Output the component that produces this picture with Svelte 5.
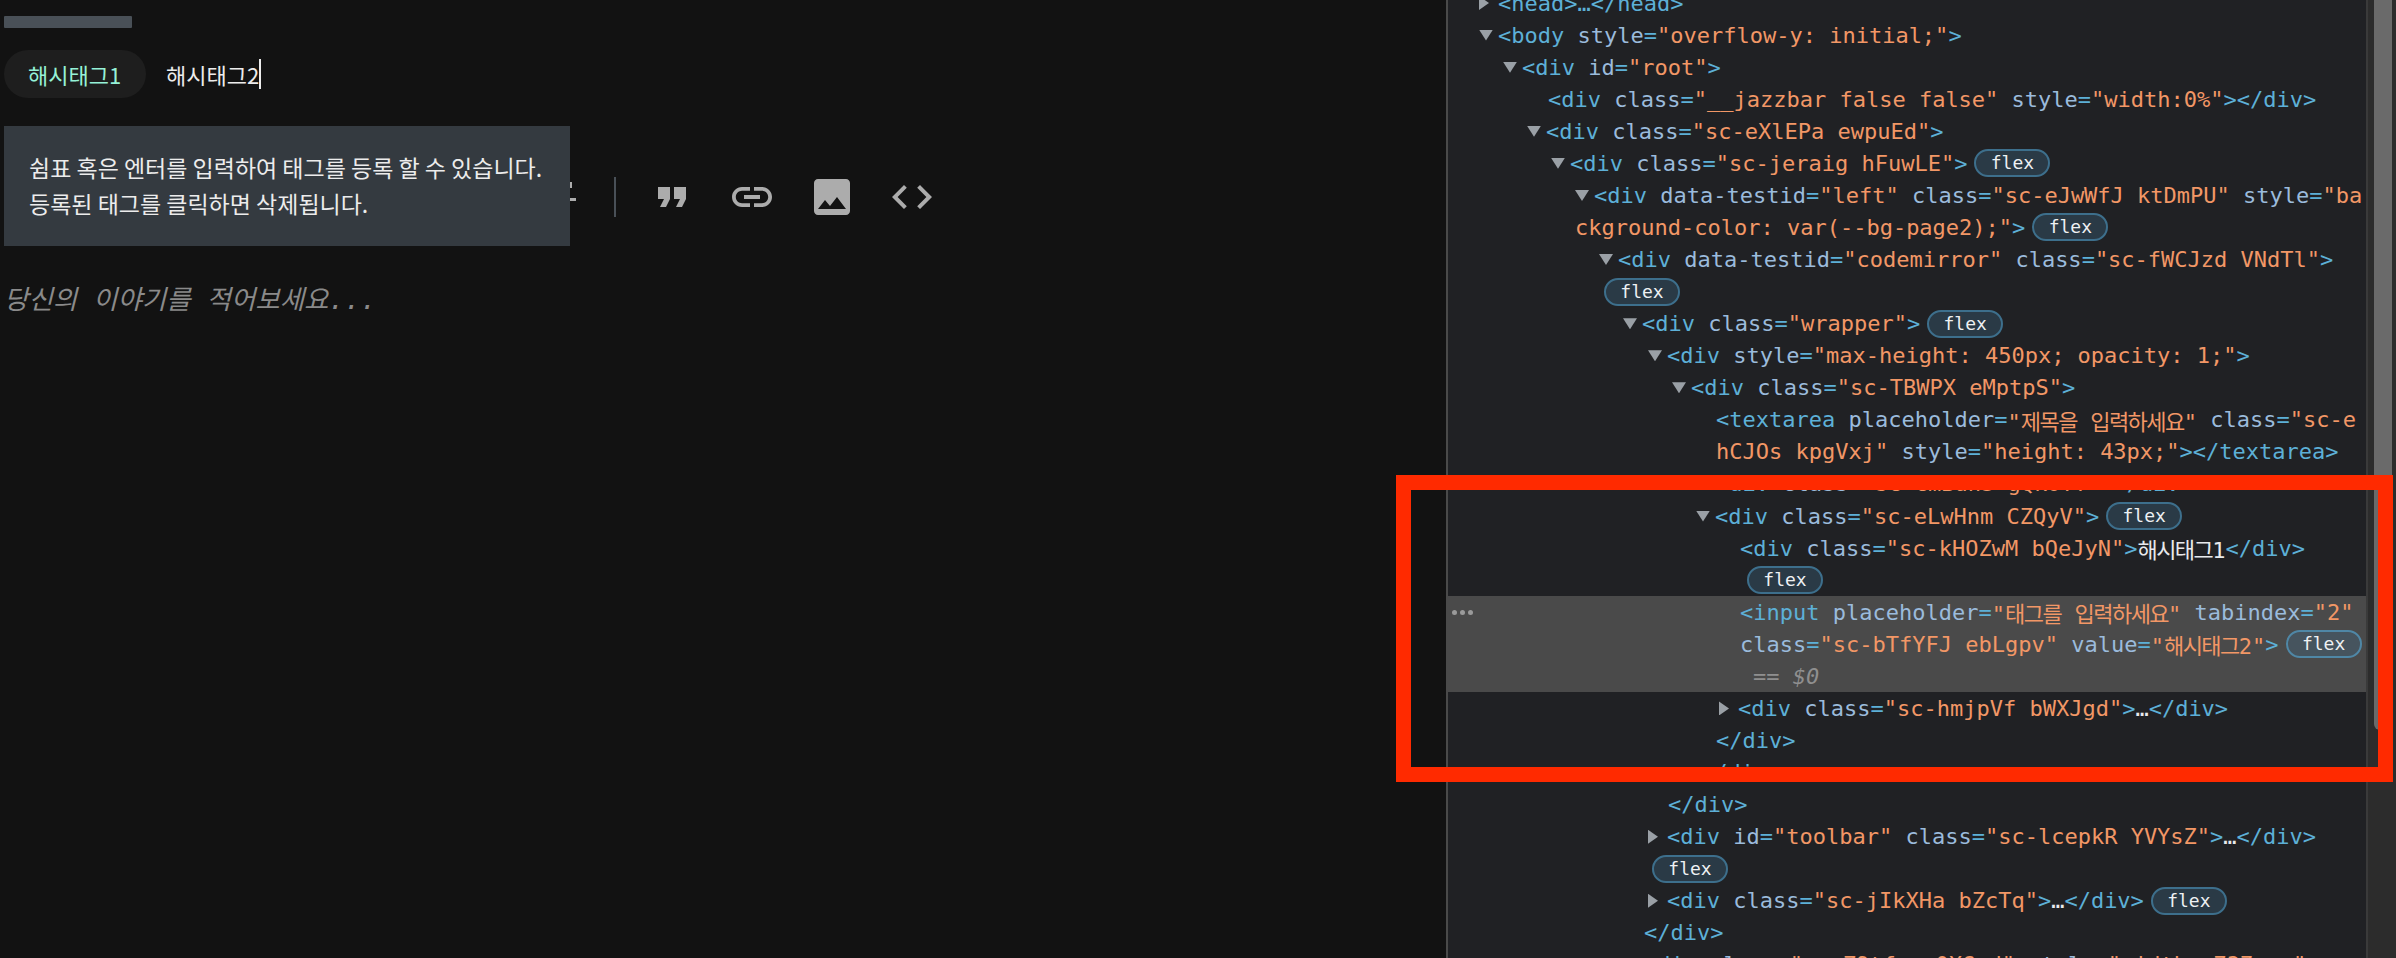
<script>
    // x is where the row's text starts on the page, the panel starts at 1448
    const rows = [
        { x: 1498, s: "<head>…</head>", tri: "right" },
        { x: 1498, s: '<body style="overflow-y: initial;">', tri: "down" },
        { x: 1522, s: '<div id="root">', tri: "down" },
        { x: 1548, s: '<div class="__jazzbar false false" style="width:0%"></div>' },
        { x: 1546, s: '<div class="sc-eXlEPa ewpuEd">', tri: "down" },
        { x: 1570, s: '<div class="sc-jeraig hFuwLE">', tri: "down", flex: true },
        { x: 1594, s: '<div data-testid="left" class="sc-eJwWfJ ktDmPU" style="ba', tri: "down" },
        { x: 1575, head: 'ckground-color: var(--bg-page2);"', s: ">", flex: true },
        { x: 1618, s: '<div data-testid="codemirror" class="sc-fWCJzd VNdTl">', tri: "down" },
        { x: 1604, s: "", flex: true },
        { x: 1642, s: '<div class="wrapper">', tri: "down", flex: true },
        { x: 1667, s: '<div style="max-height: 450px; opacity: 1;">', tri: "down" },
        { x: 1691, s: '<div class="sc-TBWPX eMptpS">', tri: "down" },
        { x: 1716, s: '<textarea placeholder="제목을 입력하세요" class="sc-e' },
        { x: 1716, head: 'hCJOs kpgVxj"', s: ' style="height: 43px;"></textarea>' },
        { x: 1716, s: '<div class="sc-cmBdnS gQkOTT"></div>' },
        { x: 1715, s: '<div class="sc-eLwHnm CZQyV">', tri: "down", flex: true },
        { x: 1740, s: '<div class="sc-kHOZwM bQeJyN">해시태그1</div>' },
        { x: 1747, s: "", flex: true },
        { x: 1740, s: '<input placeholder="태그를 입력하세요" tabindex="2"', sel: true, dots: true },
        { x: 1740, s: 'class="sc-bTfYFJ ebLgpv" value="해시태그2">', sel: true, flex: true },
        { x: 1753, s: "", sel: true, ref: true },
        { x: 1738, s: '<div class="sc-hmjpVf bWXJgd">…</div>', tri: "right" },
        { x: 1716, s: "</div>" },
        { x: 1701, s: "</div>" },
        { x: 1668, s: "</div>" },
        { x: 1667, s: '<div id="toolbar" class="sc-lcepkR YVYsZ">…</div>', tri: "right" },
        { x: 1652, s: "", flex: true },
        { x: 1667, s: '<div class="sc-jIkXHa bZcTq">…</div>', tri: "right", flex: true },
        { x: 1644, s: "</div>" },
        { x: 1644, s: '<div class="sc-Z9tfcw 0XGcd" style="width: 737px;">', tri: "right" },
    ];

    function tokens(s) {
        const out = [];
        const re = /("[^"]*"?)|([\w-]+(?==))|(>)([^<]+)(?=<)|([^"]+?(?=[\w-]+=|"|$))/g;
        let m;
        while ((m = re.exec(s))) {
            if (m[1]) out.push({ c: "val", t: m[1] });
            else if (m[2]) out.push({ c: "attr", t: m[2] });
            else if (m[3]) {
                out.push({ c: "mk", t: m[3] });
                out.push({ c: "txt", t: m[4] });
            } else out.push({ c: "mk", t: m[5] });
        }
        return out;
    }

    // hangul runs sit at the odd indexes
    const parts = (t) => t.split(/([가-힣]+)/);
</script>

<div class="page">
    <div class="left">
        <div class="title-bar"></div>
        <div class="tags">
            <div class="tag">해시태그1</div>
            <div class="tag-input">해시태그2<i class="caret"></i></div>
        </div>
        <div class="toolbar">
            <svg class="icon strike" viewBox="0 0 48 48" fill="currentColor">
                <rect x="42" y="9" width="2" height="6" />
                <rect x="42" y="25" width="6" height="3" />
            </svg>
            <div class="divider"></div>
            <svg class="icon" viewBox="0 0 24 24" fill="currentColor">
                <path d="M6 17h3l2-4V7H5v6h3zm8 0h3l2-4V7h-6v6h3z" />
            </svg>
            <svg class="icon" viewBox="0 0 24 24" fill="currentColor">
                <path d="M3.9 12c0-1.71 1.39-3.1 3.1-3.1h4V7H7c-2.76 0-5 2.24-5 5s2.24 5 5 5h4v-1.9H7c-1.71 0-3.1-1.39-3.1-3.1zM8 13h8v-2H8v2zm9-6h-4v1.9h4c1.71 0 3.1 1.39 3.1 3.1s-1.39 3.1-3.1 3.1h-4V17h4c2.76 0 5-2.24 5-5s-2.24-5-5-5z" />
            </svg>
            <svg class="icon" viewBox="0 0 24 24" fill="currentColor">
                <path d="M21 19V5c0-1.1-.9-2-2-2H5c-1.1 0-2 .9-2 2v14c0 1.1.9 2 2 2h14c1.1 0 2-.9 2-2zM8.5 13.5l2.5 3.01L14.5 12l4.5 6H5l3.5-4.5z" />
            </svg>
            <svg class="icon" viewBox="0 0 24 24" fill="currentColor">
                <path d="M9.4 16.6L4.8 12l4.6-4.6L8 6l-6 6 6 6 1.4-1.4zm5.2 0l4.6-4.6-4.6-4.6L16 6l6 6-6 6-1.4-1.4z" />
            </svg>
        </div>
        <div class="placeholder">당신의 이야기를 적어보세요...</div>
        <div class="hint">
            <p>쉼표 혹은 엔터를 입력하여 태그를 등록 할 수 있습니다.</p>
            <p>등록된 태그를 클릭하면 삭제됩니다.</p>
        </div>
    </div>

    <div class="devtools">
        <div class="tree">
            {#each rows as r}
                <div class="row" class:sel={r.sel} style="padding-left: {r.x - 1448}px">
                    {#if r.dots}
                        <span class="dots"><b></b><b></b><b></b></span>
                    {/if}
                    {#if r.tri}
                        <i class="tri {r.tri}"></i>
                    {/if}
                    {#if r.head}
                        <span class="val">{r.head}</span>
                    {/if}
                    {#if r.ref}
                        <span class="ref">== <em>$0</em></span>
                    {/if}
                    {#each tokens(r.s) as t}
                        <span class={t.c}>{#each parts(t.t) as p, i}<span class:ko={i % 2}>{p}</span>{/each}</span>
                    {/each}
                    {#if r.flex}
                        <span class="badge" class:alone={!r.s}>flex</span>
                    {/if}
                </div>
            {/each}
        </div>
        <div class="scrollbar"><div class="thumb"></div></div>
    </div>

    <div class="callout"></div>
</div>

<style>
    :global(body) {
        margin: 0;
        background: #121212;
    }
    .page {
        position: relative;
        display: flex;
        width: 2396px;
        height: 958px;
        overflow: hidden;
    }
    .left {
        position: relative;
        flex: none;
        box-sizing: border-box;
        width: 1446px;
        padding: 16px 0 0 4px;
        background: #121212;
        font-family: "Noto Sans CJK KR", sans-serif;
    }
    .title-bar {
        width: 128px;
        height: 12px;
        border-radius: 1px;
        background: #495057;
    }
    .tags {
        display: flex;
        align-items: center;
        height: 48px;
        margin-top: 22px;
        font-size: 22px;
    }
    .tag {
        display: flex;
        align-items: center;
        box-sizing: border-box;
        width: 142px;
        height: 48px;
        margin-right: 20px;
        padding-left: 24px;
        border-radius: 24px;
        background: #1e1e1e;
        color: #96f2d7;
    }
    .tag-input {
        display: flex;
        align-items: center;
        color: #ececec;
    }
    .caret {
        width: 2px;
        height: 30px;
        background: #ececec;
    }
    .toolbar {
        display: flex;
        align-items: center;
        gap: 32px;
        height: 48px;
        margin-top: 75px;
        color: #acacac;
    }
    .icon {
        flex: none;
        width: 48px;
        height: 48px;
    }
    .strike {
        margin-left: 524px;
        margin-right: 6px;
    }
    .divider {
        width: 2px;
        height: 40px;
        background: #495057;
    }
    .placeholder {
        margin-top: 57px;
        color: #8a8a8a;
        font-family: "DejaVu Sans Mono", "Noto Sans CJK KR", monospace;
        font-size: 26.5px;
        font-style: italic;
    }
    .hint {
        position: absolute;
        left: 4px;
        top: 126px;
        box-sizing: border-box;
        width: 566px;
        height: 120px;
        padding: 23px 25px;
        background: #343a40;
        color: #ececec;
        font-size: 23px;
        line-height: 36px;
    }
    .hint p {
        margin: 0;
        white-space: nowrap;
    }

    .devtools {
        display: flex;
        flex: 1;
        min-width: 0;
        border-left: 2px solid #4a4a4a;
        background: #202124;
    }
    .tree {
        flex: 1;
        min-width: 0;
        margin-top: -13px;
        overflow: hidden;
        font-family: "DejaVu Sans Mono", "Noto Sans CJK KR", monospace;
        font-size: 22px;
    }
    .row {
        position: relative;
        display: flex;
        align-items: center;
        height: 32.07px;
        white-space: pre;
    }
    .sel {
        background: #4a4a4a;
    }
    .mk {
        color: #5db0d7;
    }
    .attr {
        color: #9bbbdc;
    }
    .val {
        color: #f29766;
    }
    .txt {
        color: #e8eaed;
    }
    .ko {
        letter-spacing: -1.5px;
    }
    .ref {
        color: #8f8f8f;
    }
    .ref em {
        font-style: italic;
    }
    .tri {
        position: absolute;
        margin-left: -19px;
        background: #9aa0a6;
    }
    .tri.down {
        width: 14px;
        height: 11px;
        clip-path: polygon(0 0, 100% 0, 50% 100%);
    }
    .tri.right {
        width: 10px;
        height: 14px;
        clip-path: polygon(0 0, 100% 50%, 0 100%);
    }
    .badge {
        box-sizing: border-box;
        width: 76px;
        height: 28px;
        margin-left: 7px;
        border: 2px solid #3d6f8c;
        border-radius: 14px;
        background: #2a3a46;
        color: #eef1f3;
        font-size: 18px;
        line-height: 24px;
        text-align: center;
    }
    .badge.alone {
        margin-left: 0;
    }
    .sel .badge {
        background: #46545e;
        border-color: #4f87a6;
    }
    .dots {
        position: absolute;
        left: 4px;
        display: flex;
        gap: 3px;
    }
    .dots b {
        width: 5px;
        height: 5px;
        border-radius: 50%;
        background: #9a9a9a;
    }
    .scrollbar {
        flex: none;
        box-sizing: border-box;
        width: 30px;
        padding-left: 6px;
        border-left: 2px solid #3a3a3a;
        background: #2c2c2c;
    }
    .thumb {
        width: 18px;
        height: 730px;
        border-radius: 0 0 6px 6px;
        background: #6a6a6a;
    }
    .callout {
        position: absolute;
        left: 1396px;
        top: 475px;
        box-sizing: border-box;
        width: 997px;
        height: 307px;
        border: 15px solid #ff2a00;
    }
</style>
